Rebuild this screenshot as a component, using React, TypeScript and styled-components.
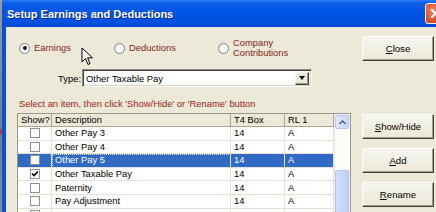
import React from "react";
import styled, { createGlobalStyle } from "styled-components";

const GlobalStyle = createGlobalStyle`
  html, body { margin: 0; padding: 0; width: 436px; height: 212px; overflow: hidden; background: #8a8a8a; }
  body { font-family: "Liberation Sans", Arial, sans-serif; font-size: 9.4px; color: #000; }
  #root { width: 436px; height: 212px; overflow: hidden; }
`;

const Screen = styled.div`
  display: flex;
  width: 436px;
  height: 212px;
  overflow: hidden;
`;

const Backdrop = styled.div`
  flex: 0 0 2px;
  background: linear-gradient(#9a9a9a, #7c7c7c 60%, #a8332b 62%, #7c7c7c 64%, #8a8a8a);
`;

const Window = styled.div`
  flex: 0 0 452px;
  display: flex;
  flex-direction: column;
  position: relative;
`;

const TitleBar = styled.div`
  flex: 0 0 27px;
  display: flex;
  align-items: center;
  padding-left: 5px;
  background: linear-gradient(#2a7bf5 0%, #0a5ee8 12%, #0054e3 45%, #0053e0 80%, #0045d0 100%);
`;

const TitleText = styled.span`
  flex: 1;
  color: #fff;
  font-family: "Liberation Sans", Arial, sans-serif;
  font-weight: bold;
  font-size: 11px;
  text-shadow: 1px 1px 0 #0a2a8a;
  padding-top: 1px;
`;

const CloseX = styled.div`
  flex: 0 0 21px;
  height: 21px;
  margin-right: 8px;
  box-sizing: border-box;
  border: 1px solid #f4f4f4;
  border-radius: 3px;
  background: radial-gradient(circle at 40% 35%, #f08a6c 0%, #e35a38 45%, #c43d1b 100%);
  display: flex;
  align-items: center;
  justify-content: center;
`;

const Frame = styled.div`
  flex: 1;
  display: flex;
  background: #ece9d8;
  border-left: 4px solid #0552e0;
  padding-left: 11px;
`;

const LeftCol = styled.div`
  flex: 0 0 333px;
  display: flex;
  flex-direction: column;
`;

const RightCol = styled.div`
  flex: 0 0 72px;
  margin-left: 11px;
  padding-top: 9px;
  display: flex;
  flex-direction: column;
`;

const RadioRow = styled.div`
  margin-top: 11px;
  height: 20px;
  display: flex;
  align-items: center;
`;

const RadioItem = styled.label<{ $w: number }>`
  flex: 0 0 ${(p) => p.$w}px;
  display: flex;
  align-items: center;
  padding-left: 2px;
  box-sizing: border-box;
`;

const RadioCircle = styled.span<{ $on?: boolean }>`
  flex: 0 0 11px;
  height: 11px;
  box-sizing: border-box;
  border-radius: 50%;
  border: 1px solid #7f8a96;
  background: radial-gradient(circle at 60% 60%, #ffffff 30%, #e2dfd3 100%);
  display: flex;
  align-items: center;
  justify-content: center;
  &::after {
    content: "";
    width: 4px;
    height: 4px;
    border-radius: 50%;
    background: ${(p) => (p.$on ? "#1a1a1a" : "transparent")};
  }
`;

const RadioLabel = styled.span`
  margin-left: 4px;
  color: #8a1c1c;
  line-height: 10px;
`;

const TypeRow = styled.div`
  margin-top: 11px;
  height: 18px;
  display: flex;
  align-items: center;
`;

const TypeLabel = styled.span`
  flex: 0 0 65px;
  text-align: right;
  padding-right: 1px;
  box-sizing: border-box;
`;

const Combo = styled.div`
  flex: 0 0 230px;
  height: 18px;
  box-sizing: border-box;
  background: #fff;
  border-top: 1px solid #8d8b80;
  border-left: 1px solid #8d8b80;
  border-right: 1px solid #fff;
  border-bottom: 1px solid #fff;
  box-shadow: inset 1px 1px 0 #404040, inset -1px -1px 0 #d8d5c6;
  display: flex;
  align-items: center;
  padding: 0 2px 0 3px;
`;

const ComboText = styled.span`
  flex: 1;
`;

const ComboButton = styled.span`
  flex: 0 0 14px;
  height: 13px;
  box-sizing: border-box;
  background: #ece9d8;
  border-top: 1px solid #f6f5ee;
  border-left: 1px solid #f6f5ee;
  border-right: 1px solid #404040;
  border-bottom: 1px solid #404040;
  box-shadow: inset -1px -1px 0 #9c9a8e;
  display: flex;
  align-items: center;
  justify-content: center;
  &::after {
    content: "";
    border-left: 3.5px solid transparent;
    border-right: 3.5px solid transparent;
    border-top: 4px solid #000;
  }
`;

const Instruction = styled.div`
  margin-top: 10px;
  padding-left: 2px;
  height: 14px;
  line-height: 14px;
  color: #a11d1d;
`;

const GridBox = styled.div`
  margin-top: 2px;
  height: 120px;
  display: flex;
  box-sizing: border-box;
  border: 1px solid #9a9890;
  border-bottom: none;
  background: #fff;
`;

const Table = styled.div`
  flex: 0 0 316px;
  display: flex;
  flex-direction: column;
`;

const cols = "34px 179px 54px 49px";

const HeaderRow = styled.div`
  display: grid;
  grid-template-columns: ${cols};
  height: 13px;
  background: #ece9d8;
`;

const HeadCell = styled.div`
  box-sizing: border-box;
  border-right: 1px solid #a8a597;
  border-bottom: 1px solid #a8a597;
  padding-left: 3px;
  line-height: 12px;
  white-space: nowrap;
`;

const Row = styled.div<{ $sel?: boolean }>`
  display: grid;
  grid-template-columns: ${cols};
  height: 13.6px;
  background: ${(p) => (p.$sel ? "#316ac5" : "#fff")};
  color: ${(p) => (p.$sel ? "#fff" : "#000")};
`;

const Cell = styled.div<{ $focus?: boolean; $center?: boolean }>`
  box-sizing: border-box;
  border-right: 1px solid #e6e3d6;
  border-bottom: 1px solid #e6e3d6;
  padding-left: 3px;
  line-height: 12px;
  white-space: nowrap;
  overflow: hidden;
  display: flex;
  align-items: center;
  justify-content: ${(p) => (p.$center ? "center" : "flex-start")};
  ${(p) => (p.$focus ? "outline: 1px dotted #d8e2f4; outline-offset: -1px;" : "")}
`;

const Check = styled.span`
  width: 10px;
  height: 10px;
  box-sizing: border-box;
  border: 1px solid #8e8f8f;
  background: #fff;
  display: flex;
  align-items: center;
  justify-content: center;
  margin-left: -3px;
`;

const ScrollBar = styled.div`
  flex: 0 0 15px;
  display: flex;
  flex-direction: column;
  background: #f4f3ee;
  border-left: 1px solid #eeede5;
`;

const ScrollBtn = styled.div`
  flex: 0 0 14px;
  margin: 1px 1px 0 0;
  box-sizing: border-box;
  border: 1px solid #b7c9f2;
  border-radius: 2px;
  background: linear-gradient(90deg, #dfe8fd, #c6d5fb);
  display: flex;
  align-items: center;
  justify-content: center;
`;

const ScrollTrack = styled.div`
  flex: 0 0 41px;
  background: #fbfbf7;
`;

const Thumb = styled.div`
  flex: 1;
  margin-right: 1px;
  box-sizing: border-box;
  border: 1px solid #b3c5ef;
  border-bottom: none;
  border-radius: 2px 2px 0 0;
  background: linear-gradient(90deg, #d2dffc, #bcd0fa);
  display: flex;
  flex-direction: column;
  align-items: center;
  justify-content: flex-end;
  padding-bottom: 4px;
  gap: 1px;
`;

const Grip = styled.span`
  width: 6px;
  height: 1px;
  background: #eef3fe;
  box-shadow: 0 1px 0 #9cb4e8;
`;

const Button = styled.button<{ $mt?: number }>`
  height: 25px;
  width: 72px;
  margin-top: ${(p) => p.$mt ?? 0}px;
  padding: 0;
  box-sizing: border-box;
  font-family: inherit;
  font-size: 9.6px;
  color: #000;
  background: linear-gradient(#f6f5ef, #ece9d8);
  border-top: 1px solid #fff;
  border-left: 1px solid #fff;
  border-right: 1px solid #404040;
  border-bottom: 1px solid #404040;
  box-shadow: inset -1px -1px 0 #a09d90, inset 1px 1px 0 #f3f2ea;
`;

const U = styled.span`
  text-decoration: underline;
`;

const Cursor = styled.svg`
  position: absolute;
  left: 79px;
  top: 47px;
`;

type Item = { id: number; desc: string; t4: string; rl: string; checked?: boolean; sel?: boolean };

const items: Item[] = [
  { id: 1, desc: "Other Pay 3", t4: "14", rl: "A" },
  { id: 2, desc: "Other Pay 4", t4: "14", rl: "A" },
  { id: 3, desc: "Other Pay 5", t4: "14", rl: "A", sel: true },
  { id: 4, desc: "Other Taxable Pay", t4: "14", rl: "A", checked: true },
  { id: 5, desc: "Paternity", t4: "14", rl: "A" },
  { id: 6, desc: "Pay Adjustment", t4: "14", rl: "A" },
  { id: 7, desc: "", t4: "", rl: "" },
];

export default function App() {
  return (
    <>
      <GlobalStyle />
      <Screen>
        <Backdrop />
        <Window>
          <TitleBar>
            <TitleText>Setup Earnings and Deductions</TitleText>
            <CloseX>
              <svg width="11" height="11" viewBox="0 0 11 11">
                <path d="M2 2 L9 9 M9 2 L2 9" stroke="#fff" strokeWidth="2" strokeLinecap="square" />
              </svg>
            </CloseX>
          </TitleBar>
          <Frame>
            <LeftCol>
              <RadioRow>
                <RadioItem $w={95}>
                  <RadioCircle $on />
                  <RadioLabel>Earnings</RadioLabel>
                </RadioItem>
                <RadioItem $w={104}>
                  <RadioCircle />
                  <RadioLabel>Deductions</RadioLabel>
                </RadioItem>
                <RadioItem $w={120}>
                  <RadioCircle />
                  <RadioLabel>
                    Company
                    <br />
                    Contributions
                  </RadioLabel>
                </RadioItem>
              </RadioRow>
              <TypeRow>
                <TypeLabel>Type:</TypeLabel>
                <Combo>
                  <ComboText>Other Taxable Pay</ComboText>
                  <ComboButton />
                </Combo>
              </TypeRow>
              <Instruction>Select an item, then click 'Show/Hide' or 'Rename' button</Instruction>
              <GridBox>
                <Table>
                  <HeaderRow>
                    <HeadCell>Show?</HeadCell>
                    <HeadCell>Description</HeadCell>
                    <HeadCell>T4 Box</HeadCell>
                    <HeadCell>RL 1</HeadCell>
                  </HeaderRow>
                  {items.map((it) => (
                    <Row key={it.id} $sel={it.sel}>
                      <Cell $center>
                        <Check>
                          {it.checked && (
                            <svg width="8" height="8" viewBox="0 0 8 8">
                              <path d="M1 3.5 L3 5.5 L7 1.5" stroke="#000" strokeWidth="1.6" fill="none" />
                            </svg>
                          )}
                        </Check>
                      </Cell>
                      <Cell $focus={it.sel}>{it.desc}</Cell>
                      <Cell>{it.t4}</Cell>
                      <Cell>{it.rl}</Cell>
                    </Row>
                  ))}
                </Table>
                <ScrollBar>
                  <ScrollBtn>
                    <svg width="7" height="5" viewBox="0 0 7 5">
                      <path d="M0.5 4 L3.5 1 L6.5 4" stroke="#4d6185" strokeWidth="1.5" fill="none" />
                    </svg>
                  </ScrollBtn>
                  <ScrollTrack />
                  <Thumb>
                    <Grip />
                    <Grip />
                    <Grip />
                  </Thumb>
                </ScrollBar>
              </GridBox>
            </LeftCol>
            <RightCol>
              <Button>
                <U>C</U>lose
              </Button>
              <Button $mt={53}>
                <U>S</U>how/Hide
              </Button>
              <Button $mt={9}>
                <U>A</U>dd
              </Button>
              <Button $mt={9}>
                <U>R</U>ename
              </Button>
            </RightCol>
          </Frame>
          <Cursor width="13" height="20" viewBox="0 0 13 20">
            <path
              d="M1 1 L1 15 L4.5 11.5 L7 17.5 L9 16.6 L6.6 10.8 L11.5 10.8 Z"
              fill="#fff"
              stroke="#000"
              strokeWidth="1"
              strokeLinejoin="miter"
            />
          </Cursor>
        </Window>
      </Screen>
    </>
  );
}
